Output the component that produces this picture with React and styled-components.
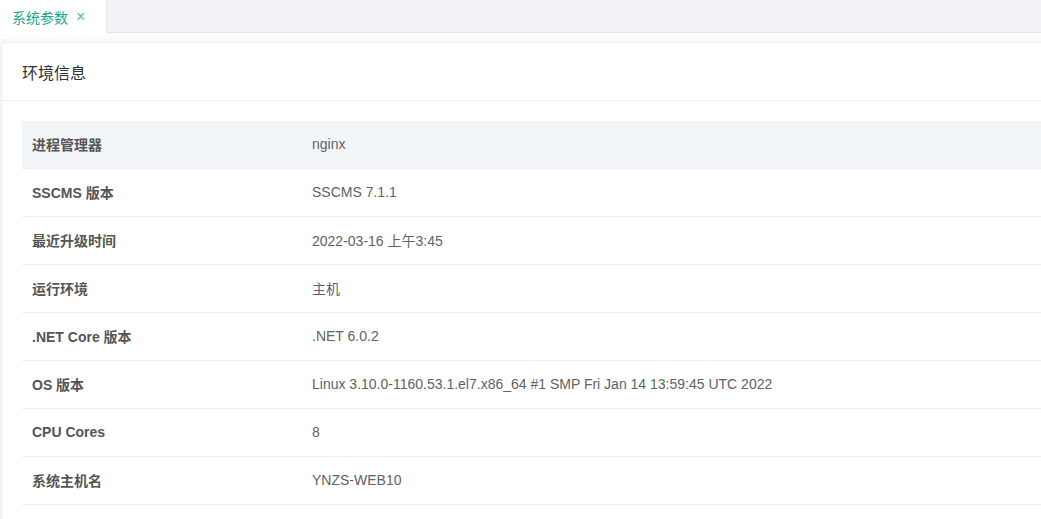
import React from "react";
import styled, { createGlobalStyle } from "styled-components";

const Global = createGlobalStyle`
  html, body {
    margin: 0;
    padding: 0;
    background: #fdfdfe;
    font-family: "Liberation Sans", "Noto Sans CJK SC", sans-serif;
    overflow: hidden;
  }
`;

const TabBar = styled.div`
  display: flex;
  height: 32px;
  background: #f0f2f5;
  border-bottom: 1px solid #e4e7ed;
`;

const Tab = styled.div`
  display: flex;
  align-items: center;
  gap: 8px;
  width: 107px;
  box-sizing: border-box;
  padding-left: 12px;
  background: ${(p) => (p.active ? "#fff" : "transparent")};
  border-right: 1px solid #e4e7ed;
  color: ${(p) => (p.active ? "#1ba58c" : "#606266")};
  font-size: 14px;
  margin-bottom: -1px;
  height: 33px;
`;

const Close = styled.span`
  font-size: 16px;
  font-weight: 300;
  color: #5fb9a8;
  line-height: 1;
`;

const Body = styled.div`
  padding: 9px 0 0 0;
`;

const Card = styled.div`
  margin-left: 1px;
  margin-right: -20px;
  background: #fff;
  border: 1px solid #ebeef5;
  border-radius: 4px;
  box-shadow: 0 2px 12px 0 rgba(0, 0, 0, 0.06);
`;

const CardHeader = styled.div`
  height: 58px;
  box-sizing: border-box;
  padding: 0 20px;
  display: flex;
  align-items: center;
  border-bottom: 1px solid #ebeef5;
  font-size: 16px;
  color: #303133;
`;

const CardBody = styled.div`
  padding: 20px 0 20px 20px;
`;

const Table = styled.div`
  display: flex;
  flex-direction: column;
`;

const Row = styled.div`
  display: grid;
  grid-template-columns: 280px 1fr;
  height: 48px;
  box-sizing: border-box;
  align-items: center;
  padding-bottom: 2px;
  border-bottom: 1px solid #ebeef5;
  background: ${(p) => (p.striped ? "#f2f5f8" : "#fff")};
`;

const Label = styled.div`
  padding-left: 10px;
  font-size: 14px;
  font-weight: bold;
  color: #555;
`;

const Value = styled.div`
  padding-left: 10px;
  font-size: 14px;
  color: #606266;
`;

const rows = [
  ["进程管理器", "nginx"],
  ["SSCMS 版本", "SSCMS 7.1.1"],
  ["最近升级时间", "2022-03-16 上午3:45"],
  ["运行环境", "主机"],
  [".NET Core 版本", ".NET 6.0.2"],
  ["OS 版本", "Linux 3.10.0-1160.53.1.el7.x86_64 #1 SMP Fri Jan 14 13:59:45 UTC 2022"],
  ["CPU Cores", "8"],
  ["系统主机名", "YNZS-WEB10"],
];

export default function App() {
  return (
    <>
      <Global />
      <TabBar>
        <Tab active>
          系统参数 <Close>×</Close>
        </Tab>
      </TabBar>
      <Body>
        <Card>
          <CardHeader>环境信息</CardHeader>
          <CardBody>
            <Table>
              {rows.map(([k, v], i) => (
                <Row key={k} striped={i === 0}>
                  <Label>{k}</Label>
                  <Value>{v}</Value>
                </Row>
              ))}
            </Table>
          </CardBody>
        </Card>
      </Body>
    </>
  );
}
